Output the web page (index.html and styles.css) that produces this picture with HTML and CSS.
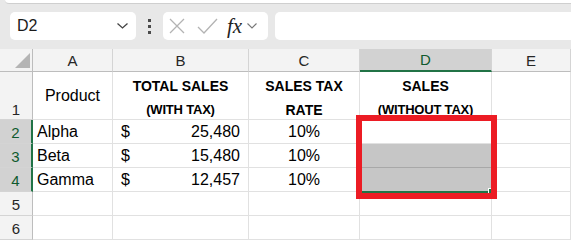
FILE: index.html
```html
<!DOCTYPE html>
<html>
<head>
    <meta charset="UTF-8">
    <title>Sales sheet</title>
    <link rel="stylesheet" href="styles.css">
</head>
<body>

<div class="top-strip"></div>

<div class="formula-bar">
    <div class="name-box">
        <span>D2</span>
        <svg width="11" height="6" viewBox="0 0 11 6"><path d="M0.5 0.5 L5.5 5 L10.5 0.5" fill="none" stroke="#444" stroke-width="1.3"/></svg>
    </div>
    <div class="dots"><i></i><i></i><i></i></div>
    <div class="fx-box">
        <svg width="16" height="16" viewBox="0 0 16 16"><path d="M1 1 L15 15 M15 1 L1 15" stroke="#b3b3b3" stroke-width="1.3"/></svg>
        <svg width="21" height="16" viewBox="0 0 21 16"><path d="M1 9 L7 15 L20 1" fill="none" stroke="#b3b3b3" stroke-width="1.3"/></svg>
        <span class="fx">fx</span>
        <svg width="10" height="6" viewBox="0 0 10 6"><path d="M0.5 0.5 L5 5 L9.5 0.5" fill="none" stroke="#777" stroke-width="1.1"/></svg>
    </div>
    <div class="formula-input"></div>
</div>

<div class="sheet">
    <div class="corner"><span class="tri"></span></div>
    <div class="col-head">A</div>
    <div class="col-head">B</div>
    <div class="col-head">C</div>
    <div class="col-head sel">D</div>
    <div class="col-head">E</div>

    <div class="row-head bottom">1</div>
    <div class="cell center middle">Product</div>
    <div class="cell title"><b>TOTAL SALES</b><b class="sub">(WITH TAX)</b></div>
    <div class="cell title"><b>SALES TAX</b><b>RATE</b></div>
    <div class="cell title"><b>SALES</b><b class="sub">(WITHOUT TAX)</b></div>
    <div class="cell"></div>

    <div class="row-head sel">2</div>
    <div class="cell">Alpha</div>
    <div class="cell money"><span>$</span><span>25,480</span></div>
    <div class="cell center">10%</div>
    <div class="cell"></div>
    <div class="cell"></div>

    <div class="row-head sel">3</div>
    <div class="cell">Beta</div>
    <div class="cell money"><span>$</span><span>15,480</span></div>
    <div class="cell center">10%</div>
    <div class="cell picked"></div>
    <div class="cell"></div>

    <div class="row-head sel">4</div>
    <div class="cell">Gamma</div>
    <div class="cell money"><span>$</span><span>12,457</span></div>
    <div class="cell center">10%</div>
    <div class="cell picked"></div>
    <div class="cell"></div>

    <div class="row-head">5</div>
    <div class="cell"></div>
    <div class="cell"></div>
    <div class="cell"></div>
    <div class="cell"></div>
    <div class="cell"></div>

    <div class="row-head">6</div>
    <div class="cell"></div>
    <div class="cell"></div>
    <div class="cell"></div>
    <div class="cell"></div>
    <div class="cell"></div>

    <!-- selection D2:D4 and the red callout box -->
    <div class="selection"><span class="handle"></span></div>
    <div class="callout"></div>
</div>

</body>
</html>
```

FILE: styles.css
```css
body {
    margin: 0;
    padding: 0;
    width: 571px;
    height: 240px;
    overflow: hidden;
    background-color: #e8e8e8;
    font-family: "Liberation Sans", Arial, sans-serif;
    color: #000;
}

/* Ribbon edge at the very top */
.top-strip {
    height: 3px;
    margin-left: 5px;
    background-color: #fff;
    border-bottom: 1px solid #cfcfcf;
    border-bottom-left-radius: 4px;
}

/* Formula bar */
.formula-bar {
    display: flex;
    align-items: center;
    height: 28px;
    padding: 8px 0 0 10px;
}

.name-box {
    box-sizing: border-box;
    width: 126px;
    height: 28px;
    display: flex;
    align-items: center;
    justify-content: space-between;
    padding: 0 8px 0 7px;
    background-color: #fff;
    border-radius: 5px;
    font-size: 16px;
    color: #1b1b1b;
}

.dots {
    width: 27px;
    display: flex;
    flex-direction: column;
    align-items: center;
    gap: 3px;
}

.dots i {
    display: block;
    width: 3px;
    height: 3px;
    background-color: #4a4a4a;
}

.fx-box {
    box-sizing: border-box;
    width: 105px;
    height: 28px;
    display: flex;
    align-items: center;
    padding-left: 6px;
    background-color: #fff;
    border-radius: 5px;
}

.fx-box svg:nth-child(2) {
    margin-left: 12px;
}

.fx {
    margin-left: 9px;
    margin-right: 5px;
    font-family: "Liberation Serif", "Times New Roman", serif;
    font-style: italic;
    font-size: 21px;
    line-height: 20px;
    color: #222;
}

.formula-input {
    flex: 1;
    height: 28px;
    margin-left: 7px;
    background-color: #fff;
    border-top-left-radius: 5px;
    border-bottom-left-radius: 5px;
}

/* Sheet grid */
.sheet {
    position: relative;
    margin-top: 9px;
    display: grid;
    grid-template-columns: 33px 80px 136px 111px 132px 79px;
    grid-template-rows: 23px 48px 24px 24px 24px 24px 24px;
    background-color: #fff;
}

.corner,
.col-head,
.row-head {
    box-sizing: border-box;
    background-color: #f3f3f3;
    color: #262626;
    font-size: 15px;
    display: flex;
    align-items: center;
    justify-content: center;
}

.corner {
    position: relative;
    border-right: 1px solid #bdbdbd;
    border-bottom: 1px solid #bdbdbd;
}

.corner .tri {
    position: absolute;
    right: 2px;
    bottom: 3px;
    width: 0;
    height: 0;
    border-left: 15px solid transparent;
    border-bottom: 15px solid #b4b4b4;
}

.col-head {
    border-right: 1px solid #d4d4d4;
    border-bottom: 1px solid #bdbdbd;
}

.col-head.sel {
    background-color: #d2d2d2;
    color: #0f5a2e;
    border-bottom: 2px solid #217346;
}

.row-head {
    border-right: 1px solid #bdbdbd;
    border-bottom: 1px solid #d4d4d4;
    padding-top: 1px;
}

.row-head.bottom {
    align-items: flex-end;
    padding-bottom: 1px;
}

.row-head.sel {
    background-color: #d2d2d2;
    color: #0f5a2e;
    border-right: 2px solid #217346;
}

.cell {
    box-sizing: border-box;
    border-right: 1px solid #e1e1e1;
    border-bottom: 1px solid #e1e1e1;
    font-size: 16px;
    line-height: 23px;
    padding: 0 4px;
    white-space: nowrap;
}

.cell.center {
    text-align: center;
}

.cell.middle {
    display: flex;
    align-items: center;
    justify-content: center;
}

.cell.title {
    display: flex;
    flex-direction: column;
    align-items: center;
    padding-top: 2px;
    font-size: 14px;
    line-height: 24px;
}

.cell.title .sub {
    font-size: 13px;
    letter-spacing: -0.2px;
}

.cell.money {
    display: flex;
    justify-content: space-between;
    padding: 0 8px 0 8px;
}

.cell.picked {
    background-color: #c6c6c6;
    border-right: 1px solid #fff;
    border-bottom: 1px solid #a8a8a8;
}

/* Selection frame over D2:D4 */
.selection {
    position: absolute;
    left: 359px;
    top: 70px;
    width: 134px;
    height: 74px;
    box-sizing: border-box;
    border: 2px solid #217346;
}

.selection .handle {
    position: absolute;
    right: -4px;
    bottom: -4px;
    width: 5px;
    height: 5px;
    background-color: #217346;
    border: 1px solid #fff;
}

/* Red highlight box */
.callout {
    position: absolute;
    left: 356px;
    top: 66px;
    width: 141px;
    height: 84px;
    box-sizing: border-box;
    border: 6px solid #ec1c24;
}
```
